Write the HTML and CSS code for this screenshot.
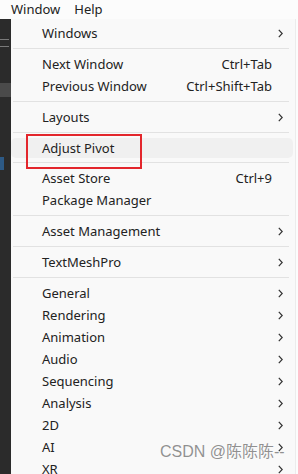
FILE: index.html
```
<!DOCTYPE html>
<html lang="en">
<head>
  <meta charset="UTF-8" />
  <title>Window Menu</title>
  <link rel="stylesheet" href="styles.css">
</head>
<body>

  <div class="menubar">
    <span class="menubar-item">Window</span>
    <span class="menubar-item">Help</span>
  </div>

  <div class="workspace">
    <!-- editor strip behind the menu -->
    <div class="editor-strip">
      <div class="strip-icon"></div>
      <div class="strip-tab"></div>
      <div class="strip-select"></div>
    </div>

    <div class="menu">
      <div class="item sub">Windows <svg class="chev" viewBox="0 0 5 9"><path d="M0.8 0.8 L4.2 4.5 L0.8 8.2"/></svg></div>
      <div class="sep"></div>
      <div class="item">Next Window <span class="key">Ctrl+Tab</span></div>
      <div class="item">Previous Window <span class="key">Ctrl+Shift+Tab</span></div>
      <div class="sep"></div>
      <div class="item sub">Layouts <svg class="chev" viewBox="0 0 5 9"><path d="M0.8 0.8 L4.2 4.5 L0.8 8.2"/></svg></div>
      <div class="sep"></div>
      <div class="item hover">Adjust Pivot <span class="mark"></span></div>
      <div class="sep"></div>
      <div class="item">Asset Store <span class="key">Ctrl+9</span></div>
      <div class="item">Package Manager</div>
      <div class="sep"></div>
      <div class="item sub">Asset Management <svg class="chev" viewBox="0 0 5 9"><path d="M0.8 0.8 L4.2 4.5 L0.8 8.2"/></svg></div>
      <div class="sep"></div>
      <div class="item sub">TextMeshPro <svg class="chev" viewBox="0 0 5 9"><path d="M0.8 0.8 L4.2 4.5 L0.8 8.2"/></svg></div>
      <div class="sep"></div>
      <div class="item sub">General <svg class="chev" viewBox="0 0 5 9"><path d="M0.8 0.8 L4.2 4.5 L0.8 8.2"/></svg></div>
      <div class="item sub">Rendering <svg class="chev" viewBox="0 0 5 9"><path d="M0.8 0.8 L4.2 4.5 L0.8 8.2"/></svg></div>
      <div class="item sub">Animation <svg class="chev" viewBox="0 0 5 9"><path d="M0.8 0.8 L4.2 4.5 L0.8 8.2"/></svg></div>
      <div class="item sub">Audio <svg class="chev" viewBox="0 0 5 9"><path d="M0.8 0.8 L4.2 4.5 L0.8 8.2"/></svg></div>
      <div class="item sub">Sequencing <svg class="chev" viewBox="0 0 5 9"><path d="M0.8 0.8 L4.2 4.5 L0.8 8.2"/></svg></div>
      <div class="item sub">Analysis <svg class="chev" viewBox="0 0 5 9"><path d="M0.8 0.8 L4.2 4.5 L0.8 8.2"/></svg></div>
      <div class="item sub">2D <svg class="chev" viewBox="0 0 5 9"><path d="M0.8 0.8 L4.2 4.5 L0.8 8.2"/></svg></div>
      <div class="item sub">AI <svg class="chev" viewBox="0 0 5 9"><path d="M0.8 0.8 L4.2 4.5 L0.8 8.2"/></svg></div>
      <div class="item sub">XR <svg class="chev" viewBox="0 0 5 9"><path d="M0.8 0.8 L4.2 4.5 L0.8 8.2"/></svg></div>
    </div>
  </div>

  <div class="watermark">CSDN @陈陈陈--</div>

</body>
</html>
```

FILE: styles.css
```
body {
  margin: 0;
  width: 298px;
  height: 474px;
  overflow: hidden;
  background: #fcfcfc;
  color: #222;
  font-family: "Noto Sans", "Noto Sans CJK SC", sans-serif;
  font-size: 13px;
  position: relative;
}

.menubar {
  height: 19px;
  display: flex;
  align-items: center;
  padding-left: 11px;
  gap: 14px;
  background: #fcfcfc;
}

.menubar-item {
  line-height: 19px;
}

.workspace {
  display: flex;
  height: 455px;
}

.editor-strip {
  width: 11px;
  flex-shrink: 0;
  background: #2b2b2b;
  display: flex;
  flex-direction: column;
}

.strip-icon {
  height: 6px;
  margin: 20px 2px 0 0;
  border-top: 1px solid #7a7a7a;
  border-bottom: 1px solid #7a7a7a;
}

.strip-tab {
  height: 14px;
  margin: 36px 0 0 0;
  background: #4a4a4a;
}

.strip-select {
  height: 13px;
  width: 4px;
  margin-top: 60px;
  background: #2d5a86;
}

.menu {
  flex: 1;
  background: #f9f9f9;
  padding-top: 3px;
  margin-right: 2px;
  border-right: 1px solid #ececec;
}

.item {
  height: 22px;
  display: flex;
  align-items: center;
  padding-left: 31px;
  padding-right: 12px;
  white-space: nowrap;
  position: relative;
}

.item .key {
  margin-left: auto;
  margin-right: 11px;
}

.item .chev {
  margin-left: auto;
  width: 5px;
  height: 9px;
  fill: none;
  stroke: #333;
  stroke-width: 1.2;
}

.item.hover {
  background: #f0f0f0;
  border-radius: 5px;
  margin: 1px 2px 0 0;
  height: 20px;
}

.sep {
  height: 9px;
  display: flex;
  align-items: center;
  padding: 0 6px 0 2px;
}

.sep::before {
  content: "";
  flex: 1;
  height: 1px;
  background: #e2e2e2;
}

.mark {
  position: absolute;
  left: 15px;
  top: -4px;
  width: 112px;
  height: 31px;
  border: 2px solid #e3262c;
}

.watermark {
  position: absolute;
  left: 160px;
  top: 438px;
  font-family: "Liberation Sans", "Noto Sans CJK SC", sans-serif;
  font-size: 16px;
  color: rgba(110, 110, 110, 0.75);
  white-space: nowrap;
}
```
